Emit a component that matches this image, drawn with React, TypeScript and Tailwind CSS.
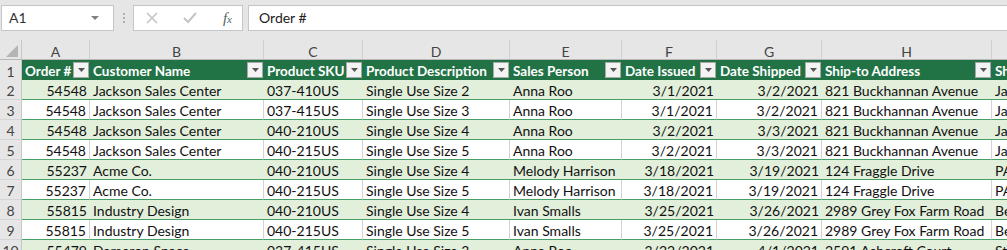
import React from "react";

const cols = [
  { key: "A", w: 68, title: "Order #", align: "right" },
  { key: "B", w: 174, title: "Customer Name", align: "left" },
  { key: "C", w: 99, title: "Product SKU", align: "left" },
  { key: "D", w: 147, title: "Product Description", align: "left" },
  { key: "E", w: 112, title: "Sales Person", align: "left" },
  { key: "F", w: 95, title: "Date Issued", align: "right" },
  { key: "G", w: 105, title: "Date Shipped", align: "right" },
  { key: "H", w: 170, title: "Ship-to Address", align: "left" },
  { key: "I", w: 120, title: "Ship-to City", align: "left" },
];

const rows: string[][] = [
  ["54548", "Jackson Sales Center", "037-410US", "Single Use Size 2", "Anna Roo", "3/1/2021", "3/2/2021", "821 Buckhannan Avenue", "Jackson"],
  ["54548", "Jackson Sales Center", "037-415US", "Single Use Size 3", "Anna Roo", "3/1/2021", "3/2/2021", "821 Buckhannan Avenue", "Jackson"],
  ["54548", "Jackson Sales Center", "040-210US", "Single Use Size 4", "Anna Roo", "3/2/2021", "3/3/2021", "821 Buckhannan Avenue", "Jackson"],
  ["54548", "Jackson Sales Center", "040-215US", "Single Use Size 5", "Anna Roo", "3/2/2021", "3/3/2021", "821 Buckhannan Avenue", "Jackson"],
  ["55237", "Acme Co.", "040-210US", "Single Use Size 4", "Melody Harrison", "3/18/2021", "3/19/2021", "124 Fraggle Drive", "PALO ALTO"],
  ["55237", "Acme Co.", "040-215US", "Single Use Size 5", "Melody Harrison", "3/18/2021", "3/19/2021", "124 Fraggle Drive", "PALO ALTO"],
  ["55815", "Industry Design", "040-210US", "Single Use Size 4", "Ivan Smalls", "3/25/2021", "3/26/2021", "2989 Grey Fox Farm Road", "Bellevue"],
  ["55815", "Industry Design", "040-215US", "Single Use Size 5", "Ivan Smalls", "3/25/2021", "3/26/2021", "2989 Grey Fox Farm Road", "Bellevue"],
  ["55479", "Dameron Space", "037-415US", "Single Use Size 3", "Anna Roo", "3/22/2021", "4/1/2021", "2591 Ashcroft Court", "Stockton"],
];

const font = { fontFamily: "Lato, 'Liberation Sans', sans-serif" };

function FilterButton() {
  return (
    <div className="w-[16px] h-[16px] shrink-0 bg-[#f3f3f3] border border-[#a8a8a8] flex items-center justify-center mr-[1px]">
      <svg width="7" height="4" viewBox="0 0 7 4">
        <polygon points="0,0 7,0 3.5,4" fill="#555" />
      </svg>
    </div>
  );
}

export default function App() {
  return (
    <div
      className="w-[1007px] h-[250px] overflow-hidden bg-white text-[14px] leading-none"
      style={font}
    >
      {/* formula bar */}
      <div className="h-[40px] bg-[#e6e6e6] flex items-start pt-[5px]">
        <div className="ml-[1px] w-[113px] h-[26px] bg-white border border-[#c6c6c6] flex items-center justify-between pl-[7px] pr-[14px] text-[#333]">
          <span>A1</span>
          <svg width="8" height="4" viewBox="0 0 8 4">
            <polygon points="0,0 8,0 4,4" fill="#808080" />
          </svg>
        </div>
        <div className="w-[19px] h-[26px] flex flex-col items-center justify-center gap-[2px]">
          <div className="w-[2px] h-[2px] bg-[#b0b0b0]" />
          <div className="w-[2px] h-[2px] bg-[#b0b0b0]" />
          <div className="w-[2px] h-[2px] bg-[#b0b0b0]" />
        </div>
        <div className="w-[110px] h-[26px] bg-white border border-[#c6c6c6] flex items-center pl-[12px] pr-[10px] justify-between">
          <svg width="12" height="12" viewBox="0 0 12 12">
            <path d="M1 1 L11 11 M11 1 L1 11" stroke="#c4c4c4" strokeWidth="1.6" />
          </svg>
          <svg width="14" height="12" viewBox="0 0 14 12">
            <path d="M1 6 L5 10 L13 1" stroke="#c4c4c4" strokeWidth="2" fill="none" />
          </svg>
          <span
            className="italic text-[15px] text-[#4f6466]"
            style={{ fontFamily: "'Liberation Serif', serif" }}
          >
            f<span className="text-[11px]">x</span>
          </span>
        </div>
        <div className="ml-[5px] flex-1 h-[26px] bg-white border border-[#c6c6c6] border-r-0 flex items-center pl-[10px] text-[#222]">
          Order #
        </div>
      </div>

      {/* column header row */}
      <div className="flex h-[20px] bg-[#e6e6e6] border-b border-[#b8b8b8]">
        <div className="w-[22px] shrink-0 border-r border-[#c6c6c6] relative">
          <svg className="absolute left-[6px] top-[5px]" width="12" height="12" viewBox="0 0 12 12">
            <polygon points="12,0 12,12 0,12" fill="#b4b4b4" />
          </svg>
        </div>
        {cols.map((c) => (
          <div
            key={c.key}
            className="shrink-0 border-r border-[#d0d0d0] flex items-center justify-center text-[#444] text-[14px] pt-[4px]"
            style={{ width: c.w }}
          >
            {c.key}
          </div>
        ))}
      </div>

      {/* table header row 1 */}
      <div className="flex h-[20px]">
        <div className="w-[22px] shrink-0 bg-[#e6e6e6] border-r border-[#c6c6c6] flex items-center justify-center text-[#444] pt-[3px]">
          1
        </div>
        {cols.map((c) => (
          <div
            key={c.key}
            className="shrink-0 bg-[#217346] flex items-center justify-between pl-[3px] text-white font-bold text-[13.5px] overflow-hidden whitespace-nowrap"
            style={{ width: c.w }}
          >
            <span className="pt-[3px]">{c.title}</span>
            <FilterButton />
          </div>
        ))}
      </div>

      {/* data rows */}
      {rows.map((r, i) => {
        const band = i % 2 === 0;
        return (
          <div key={i} className="flex h-[20px]">
            <div className="w-[22px] shrink-0 bg-[#e6e6e6] border-r border-b border-r-[#c6c6c6] border-b-[#d6d6d6] flex items-center justify-center text-[#444] pt-[3px]">
              {i + 2}
            </div>
            {cols.map((c, j) => (
              <div
                key={c.key}
                className={
                  "shrink-0 border-b border-b-[#47a068] flex items-center px-[3px] pt-[3px] text-[#111] whitespace-nowrap overflow-hidden " +
                  (band ? "bg-[#e2efda] " : "bg-white border-r border-r-[#d4d4d4] ") +
                  (c.align === "right" ? "justify-end" : "justify-start")
                }
                style={{ width: c.w }}
              >
                {r[j]}
              </div>
            ))}
          </div>
        );
      })}
    </div>
  );
}
